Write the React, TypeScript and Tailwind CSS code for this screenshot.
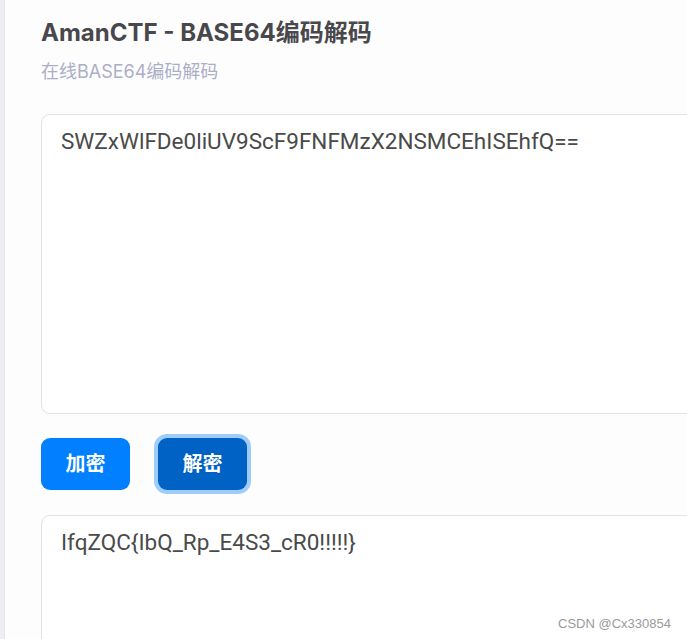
import React from "react";

export default function App() {
  return (
    <div className="flex w-[687px] h-[639px] overflow-hidden bg-[#fdfdfd]" style={{ fontFamily: 'Inter, "Noto Sans CJK SC", sans-serif' }}>
      <div className="w-[5px] shrink-0 bg-[#eceef2] border-r border-[#e4e6ea]" />
      <div className="block pl-[36px] pt-[17px] shrink-0">
        <h1 className="text-[24px] leading-[32px] font-bold text-[#48484c]">AmanCTF - BASE64编码解码</h1>
        <p className="mt-[11px] text-[18px] leading-[24px] text-[#acaec8]">在线BASE64编码解码</p>
        <div
          className="mt-[30px] w-[700px] h-[300px] rounded-[9px] border border-[#e2e2e2] bg-white px-[19px] pt-[12px] text-[22.5px] leading-[28px] text-[#4a4a4a]"
          style={{ fontFamily: 'Roboto, "Noto Sans", sans-serif' }}
        >
          SWZxWlFDe0liUV9ScF9FNFMzX2NSMCEhISEhfQ==
        </div>
        <div className="mt-[24px] flex gap-[28px] items-center">
          <button className="w-[89px] h-[52px] rounded-[9px] bg-[#0080ff] text-white text-[20px] font-bold">加密</button>
          <button className="w-[89px] h-[52px] rounded-[9px] bg-[#0062c4] text-white text-[20px] font-bold ring-4 ring-[#9fcdfb]">解密</button>
        </div>
        <div
          className="mt-[25px] relative w-[700px] h-[200px] rounded-[9px] border border-[#e2e2e2] bg-white px-[19px] pt-[12px] text-[22.5px] leading-[28px] text-[#4a4a4a]"
          style={{ fontFamily: 'Roboto, "Noto Sans", sans-serif' }}
        >
          IfqZQC{"{"}IbQ_Rp_E4S3_cR0!!!!!{"}"}
          <span
            className="absolute left-[516px] top-[100px] text-[13px] leading-[16px] text-[#9a9a9a]"
            style={{ fontFamily: '"Liberation Sans", Arial, sans-serif' }}
          >
            CSDN @Cx330854
          </span>
        </div>
      </div>
    </div>
  );
}
